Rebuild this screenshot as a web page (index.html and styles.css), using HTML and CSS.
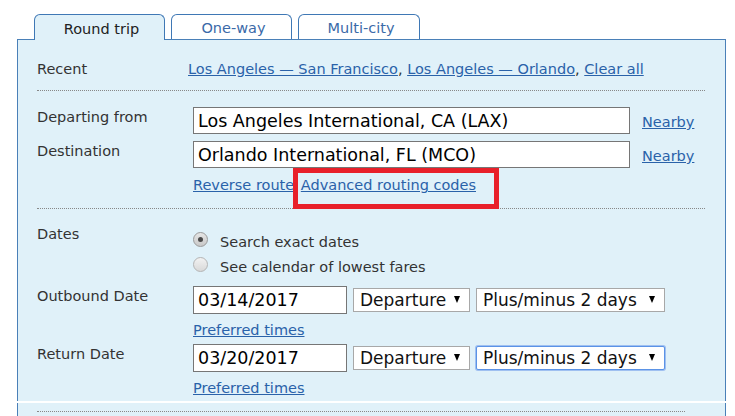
FILE: index.html
```html
<!DOCTYPE html>
<html lang="en">
<head>
<meta charset="utf-8">
<title>Flight search</title>
<link rel="stylesheet" href="styles.css">
</head>
<body>
<div class="page">
  <div class="tabs">
    <div class="tab tab-round active">Round trip</div>
    <div class="tab tab-one">One-way</div>
    <div class="tab tab-multi">Multi-city</div>
  </div>
  <div class="panel">
    <div class="recent">
      <div class="label">Recent</div>
      <div class="recent-links"><a href="#">Los Angeles — San Francisco</a>, <a href="#">Los Angeles — Orlando</a>, <a href="#">Clear all</a></div>
    </div>
    <hr class="dots dots-first">

    <div class="section route">
      <div class="frow">
        <div class="label">Departing from</div>
        <input class="field field-wide" type="text" value="Los Angeles International, CA (LAX)">
        <a class="nearby" href="#">Nearby</a>
      </div>
      <div class="frow frow-gap">
        <div class="label">Destination</div>
        <input class="field field-wide" type="text" value="Orlando International, FL (MCO)">
        <a class="nearby" href="#">Nearby</a>
      </div>
      <div class="frow frow-gap">
        <div class="label"></div>
        <div class="route-links"><a href="#">Reverse route</a> <a class="hl" href="#">Advanced routing codes</a></div>
      </div>
    </div>
    <hr class="dots dots-second">

    <div class="section dates">
      <div class="frow dates-first">
        <div class="label">Dates</div>
        <div class="options">
          <div class="opt"><span class="radio checked"></span><span>Search exact dates</span></div>
          <div class="opt"><span class="radio"></span><span>See calendar of lowest fares</span></div>
        </div>
      </div>
      <div class="frow row-outbound">
        <div class="label">Outbound Date</div>
        <div class="daterow">
          <input class="field field-date" type="text" value="03/14/2017">
          <div class="select sel-dep"><span>Departure</span><span class="caret"></span></div>
          <div class="select sel-pm"><span>Plus/minus 2 days</span><span class="caret"></span></div>
        </div>
      </div>
      <div class="frow row-pref">
        <div class="label"></div>
        <a class="pref" href="#">Preferred times</a>
      </div>
      <div class="frow row-return">
        <div class="label">Return Date</div>
        <div class="daterow">
          <input class="field field-date" type="text" value="03/20/2017">
          <div class="select sel-dep"><span>Departure</span><span class="caret"></span></div>
          <div class="select sel-pm focused"><span>Plus/minus 2 days</span><span class="caret"></span></div>
        </div>
      </div>
      <div class="frow row-pref">
        <div class="label"></div>
        <a class="pref" href="#">Preferred times</a>
      </div>
    </div>
  </div>
  <div class="panel panel2">
    <hr class="dots dots-short">
  </div>
</div>
</body>
</html>
```

FILE: styles.css
```css
html, body {
  margin: 0;
  padding: 0;
  background: #ffffff;
}
body {
  font-family: "DejaVu Sans", Verdana, sans-serif;
  font-size: 14.5px;
  color: #333333;
  overflow: hidden;
}
a {
  color: #2a62a9;
  text-decoration: underline;
}
.page {
  padding: 14px 0 0 17px;
}
.tabs {
  display: flex;
  align-items: flex-start;
  gap: 6px;
  padding-left: 17px;
  height: 25px;
}
.tab {
  box-sizing: border-box;
  height: 25px;
  border: 1px solid #3f78b5;
  border-bottom: none;
  border-radius: 6px 6px 0 0;
  background: #ffffff;
  color: #3b6aa8;
  display: flex;
  align-items: center;
  justify-content: center;
  padding: 2px 0 0 4px;
}
.tab-round { width: 131px; }
.tab-one { width: 121px; }
.tab-multi { width: 122px; }
.tab.active {
  height: 26px;
  margin-bottom: -1px;
  background: #e0f1f9;
  color: #222222;
  position: relative;
  z-index: 1;
}
.panel {
  box-sizing: border-box;
  width: 709px;
  background: #e0f1f9;
  border: 1px solid #4a80b8;
  border-bottom: none;
  padding: 19px 20px 3px 19px;
}
.panel2 {
  margin-top: 2px;
  border-top: none;
  padding-top: 8px;
  height: 30px;
}
.label {
  line-height: 20px;
  color: #333333;
}
.recent {
  display: grid;
  grid-template-columns: 151px 1fr;
  line-height: 20px;
}
.recent-links {
  color: #333333;
}
hr.dots {
  border: 0;
  border-top: 1px dotted #888888;
  height: 0;
  margin: 0;
}
hr.dots-first { margin-top: 11px; }
hr.dots-second { margin-top: 13px; }
hr.dots-short { margin-right: 20px; }

.frow {
  display: grid;
  grid-template-columns: 156px auto 1fr;
  align-items: start;
}
.dates .frow {
  grid-template-columns: 156px 1fr;
}
.route {
  padding-top: 16px;
}
.frow-gap {
  margin-top: 7px;
}
.field {
  box-sizing: border-box;
  margin: 0;
  border: 1px solid #767676;
  border-radius: 0;
  background: #ffffff;
  font-family: "DejaVu Sans", Verdana, sans-serif;
  font-size: 17.5px;
  color: #000000;
  padding: 0 4px;
  outline: none;
}
.field-wide {
  width: 437px;
  height: 27px;
}
.field-date {
  width: 154px;
  height: 28px;
}
.nearby {
  margin-left: 12px;
  align-self: center;
  line-height: 20px;
  padding-top: 3px;
}
.route-links {
  line-height: 20px;
}
.hl {
  display: inline-block;
  position: relative;
  margin-left: 2px;
  line-height: 20px;
}
.hl::after {
  content: "";
  position: absolute;
  left: -8px;
  right: -23px;
  top: -7px;
  bottom: -14px;
  border: 5px solid #e8202a;
  pointer-events: none;
}

.dates {
  padding-top: 15px;
}
.options {
  margin-top: 5px;
}
.opt {
  display: flex;
  align-items: center;
  height: 25px;
  color: #333333;
}
.radio {
  box-sizing: border-box;
  width: 15px;
  height: 15px;
  border-radius: 50%;
  border: 1px solid #b4b4b4;
  background: linear-gradient(#f2f2f2, #d9d9d9);
  margin: 0 12px 5px 0;
  display: flex;
  align-items: center;
  justify-content: center;
}
.radio.checked {
  border-color: #9a9a9a;
  background: linear-gradient(#e6e6e6, #c8c8c8);
}
.radio.checked::after {
  content: "";
  width: 5px;
  height: 5px;
  border-radius: 50%;
  background: #4a4a4a;
}
.row-outbound {
  margin-top: 7px;
}
.row-pref {
  margin-top: 6px;
}
.row-return {
  margin-top: 4px;
}
.pref {
  justify-self: start;
  line-height: 20px;
}
.daterow {
  display: flex;
  align-items: center;
  gap: 6px;
}
.select {
  box-sizing: border-box;
  height: 24px;
  border: 1px solid #a8a8a8;
  background: #ffffff;
  display: flex;
  align-items: center;
  justify-content: space-between;
  padding: 0 9px 0 6px;
  font-size: 17px;
  color: #111111;
}
.sel-dep { width: 117px; }
.sel-pm { width: 189px; }
.select.focused {
  border-color: #5b93e6;
  border-radius: 2px;
  box-shadow: 0 0 0 1px #9fc0f1;
}
.caret {
  width: 0;
  height: 0;
  border-left: 3.5px solid transparent;
  border-right: 3.5px solid transparent;
  border-top: 7px solid #000000;
  margin-top: -2px;
}
```
